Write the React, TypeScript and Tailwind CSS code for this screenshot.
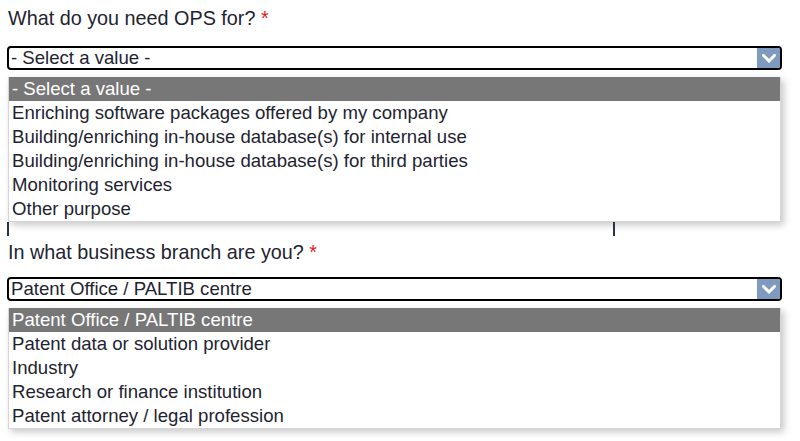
import React from "react";

const purposes = [
  "- Select a value -",
  "Enriching software packages offered by my company",
  "Building/enriching in-house database(s) for internal use",
  "Building/enriching in-house database(s) for third parties",
  "Monitoring services",
  "Other purpose",
];

const branches = [
  "Patent Office / PALTIB centre",
  "Patent data or solution provider",
  "Industry",
  "Research or finance institution",
  "Patent attorney / legal profession",
];

function Chevron() {
  return (
    <svg width="14" height="9" viewBox="0 0 14 9" fill="none">
      <path d="M1.5 1.5 L7 7 L12.5 1.5" stroke="#ffffff" strokeWidth="3" strokeLinecap="square" />
    </svg>
  );
}

function SelectBox({ value }: { value: string }) {
  return (
    <div className="flex h-[24px] w-[775px] items-stretch overflow-hidden rounded-[4px] border-2 border-black bg-white">
      <div className="flex-1 pl-[2px] text-[18.6px] leading-[20px] text-[#1e2430]">{value}</div>
      <div className="flex w-[23px] items-center justify-center bg-[#7e9bbf]">
        <Chevron />
      </div>
    </div>
  );
}

function OptionList({ items }: { items: string[] }) {
  return (
    <div className="ml-[1px] w-[773px] border-x border-b border-[#d6d6d6] bg-white shadow-[3px_3px_7px_rgba(0,0,0,0.22)]">
      {items.map((it, i) => (
        <div
          key={it}
          className={
            i === 0
              ? "h-[24px] bg-[#777777] pl-[3px] text-[18.6px] leading-[24px] text-white"
              : "h-[24px] pl-[3px] text-[18.6px] leading-[24px] text-[#1e2430]"
          }
        >
          {it}
        </div>
      ))}
    </div>
  );
}

function Label({ text }: { text: string }) {
  return (
    <div className="h-[28px] pl-[1px] text-[19.8px] leading-[28px] text-[#1e2430]">
      {text} <span className="text-[#e02020]">*</span>
    </div>
  );
}

export default function App() {
  return (
    <div
      className="h-[441px] w-[800px] overflow-hidden bg-white pl-[7px] pt-[4px]"
      style={{ fontFamily: '"Liberation Sans", Arial, sans-serif' }}
    >
      <Label text="What do you need OPS for?" />
      <div className="mt-[14px]">
        <SelectBox value="- Select a value -" />
      </div>
      <div className="mt-[7px]">
        <OptionList items={purposes} />
      </div>
      <div className="h-[14px] w-[608px] border-x-2 border-[#2a3344]" />
      <div className="mt-[2px]">
        <Label text="In what business branch are you?" />
      </div>
      <div className="mt-[11px]">
        <SelectBox value="Patent Office / PALTIB centre" />
      </div>
      <div className="mt-[7px]">
        <OptionList items={branches} />
      </div>
    </div>
  );
}
